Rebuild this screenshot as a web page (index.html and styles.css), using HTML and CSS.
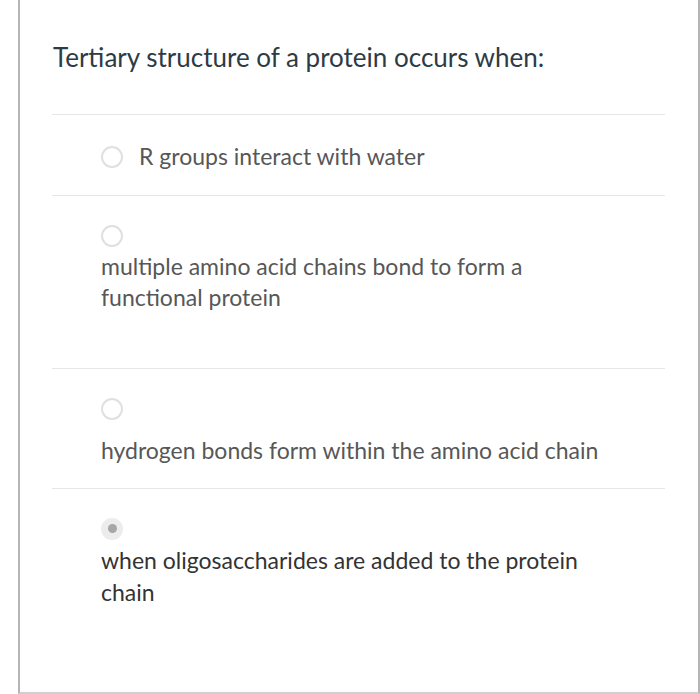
FILE: index.html
```html
<!DOCTYPE html>
<html>
<head>
<meta charset="utf-8">
<link rel="stylesheet" href="styles.css">
</head>
<body>
<div class="card">
  <div class="question">Tertiary structure of a protein occurs when:</div>
  <div class="option inline">
    <span class="radio"></span>
    <span class="text">R groups interact with water</span>
  </div>
  <div class="option">
    <div class="radio-line"><span class="radio"></span></div>
    <div class="text trailing">multiple amino acid chains bond to form a<br>functional protein</div>
  </div>
  <div class="option">
    <div class="radio-line"><span class="radio"></span></div>
    <div class="text spaced">hydrogen bonds form within the amino acid chain</div>
  </div>
  <div class="option selected">
    <div class="radio-line"><span class="radio"></span></div>
    <div class="text tall">when oligosaccharides are added to the protein<br>chain</div>
  </div>
</div>
</body>
</html>
```
FILE: styles.css
```css
html, body {
  margin: 0;
  padding: 0;
  background: #ffffff;
}
body {
  font-family: Lato, "Open Sans", sans-serif;
}
.card {
  box-sizing: border-box;
  margin-left: 18px;
  width: 682px;
  height: 694px;
  border-left: 2px solid #b5b5b5;
  border-right: 2px solid #b5b5b5;
  border-bottom: 2px solid #cfcfcf;
  padding: 0 33px 0 32px;
}
.question {
  padding-top: 39px;
  padding-bottom: 39px;
  font-size: 26px;
  line-height: 36px;
  color: #2d3b45;
  padding-left: 1px;
  border-bottom: 1px solid #e6e6e6;
}
.option {
  padding: 24px 0 22px 49px;
  border-bottom: 1px solid #e6e6e6;
  font-size: 23px;
  line-height: 31px;
  color: #575757;
}
.option:last-child {
  border-bottom: none;
}
.option.inline {
  display: flex;
  align-items: center;
  gap: 16px;
  padding-top: 26px;
  padding-bottom: 23px;
}
.radio-line {
  height: 31px;
  display: flex;
  align-items: center;
}
.radio {
  box-sizing: border-box;
  display: inline-flex;
  align-items: center;
  justify-content: center;
  width: 22px;
  height: 22px;
  border: 2px solid #e0e0e0;
  border-radius: 50%;
  background: #ffffff;
  flex: none;
}
.selected .radio {
  background: #ececec;
  border-color: #ececec;
}
.selected .radio::after {
  content: "";
  width: 9px;
  height: 9px;
  border-radius: 50%;
  background: #a6a6a6;
}
.selected .text {
  color: #333333;
}
.trailing {
  margin-bottom: 33px;
}
.spaced {
  margin-top: 11px;
}
.tall {
  line-height: 32px;
}
```
